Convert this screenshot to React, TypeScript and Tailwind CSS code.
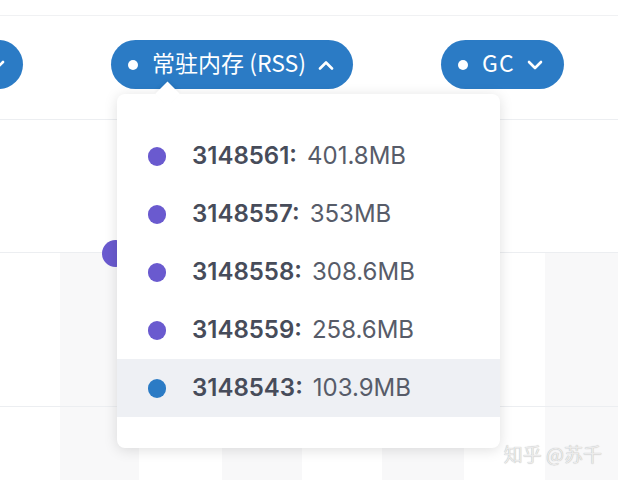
import React from 'react'

const ROWS = [
  { id: '3148561', value: '401.8MB', c: '#6a5acf' },
  { id: '3148557', value: '353MB', c: '#6a5acf' },
  { id: '3148558', value: '308.6MB', c: '#6a5acf' },
  { id: '3148559', value: '258.6MB', c: '#6a5acf' },
  { id: '3148543', value: '103.9MB', c: '#2b7bc5', active: true },
]

// chart band columns below the top area: [width, shaded]
const COLS: [number, boolean][] = [
  [60, false], [79, true], [83, false], [80, true], [80, false], [82, true], [81, false], [73, true],
]

function Chevron({ up }: { up?: boolean }) {
  return (
    <svg width="16" height="10" viewBox="0 0 16 10" className="shrink-0">
      <polyline
        points={up ? '2,8.5 8,2.5 14,8.5' : '2,2 8,8 14,2'}
        fill="none" stroke="white" strokeWidth="2.6" strokeLinecap="round" strokeLinejoin="round"
      />
    </svg>
  )
}

function Pill({ label, up, className = '' }: { label?: string; up?: boolean; className?: string }) {
  return (
    <div className={`h-[49px] rounded-full bg-[#2b7bc5] flex items-center pl-[17px] text-white shrink-0 ${className}`}>
      {label && <span className="w-[10px] h-[10px] rounded-full bg-white shrink-0" />}
      {label && (
        <span className="ml-[14px] mb-[4px] text-[23px] leading-none whitespace-nowrap font-['Noto_Sans_CJK_SC',sans-serif]">{label}</span>
      )}
      <span className="ml-[12px]"><Chevron up={up} /></span>
    </div>
  )
}

export default function App() {
  return (
    <div className="relative w-[618px] h-[480px] overflow-hidden bg-white flex flex-col">
      <div className="h-[16px] border-b border-[#f0f1f3] shrink-0" />

      <div className="h-[104px] border-b border-[#eceef1] shrink-0 flex items-start gap-[88px] pt-[24px]">
        <Pill className="w-[141px] ml-[-118px] justify-end pr-[18px]" />
        <Pill label="常驻内存 (RSS)" up className="pr-[19px]" />
        <Pill label="GC" className="pr-[21px] tracking-[1px]" />
      </div>

      <div className="h-[133px] border-b border-[#eceef1] shrink-0" />

      <div className="flex-1 flex">
        {COLS.map(([w, shaded], i) => (
          <div key={i} className={`flex flex-col shrink-0 ${shaded ? 'bg-[#f8f8f9]' : 'bg-white'}`} style={{ width: w }}>
            <div className="h-[154px] border-b border-[#eceef1]" />
          </div>
        ))}
      </div>

      {/* chart point peeking from behind the tooltip */}
      <div className="absolute left-[102px] top-[240px] w-[27px] h-[27px] rounded-full bg-[#6a5acf]" />

      {/* dropdown */}
      <div className="absolute left-[117px] top-[94px] w-[383px] h-[354px] bg-white rounded-[8px] shadow-[0_2px_14px_rgba(0,0,0,0.13)] pt-[33px] font-['Inter',sans-serif]">
        <div className="absolute left-[42px] top-[-9px] w-[17px] h-[17px] bg-white rotate-45 shadow-[-2px_-2px_4px_rgba(0,0,0,0.05)]" />
        <div className="relative flex flex-col">
          {ROWS.map((r) => (
            <div key={r.id} className={`h-[58px] flex items-center pl-[31px] ${r.active ? 'bg-[#eef0f4]' : ''}`}>
              <span className="w-[18px] h-[19px] rounded-full shrink-0" style={{ background: r.c }} />
              <span className="ml-[26px] text-[24px] font-semibold text-[#474c5a] leading-none">{r.id}:</span>
              <span className="ml-[10px] text-[24px] text-[#575c69] leading-none">{r.value}</span>
            </div>
          ))}
        </div>
      </div>

      <div className="absolute right-[16px] bottom-[17px] text-[19px] leading-none text-[#ebebeb] [text-shadow:0_0_1px_#a8a8a8] font-['Noto_Sans_CJK_SC',sans-serif]">
        知乎 @苏千
      </div>
    </div>
  )
}
